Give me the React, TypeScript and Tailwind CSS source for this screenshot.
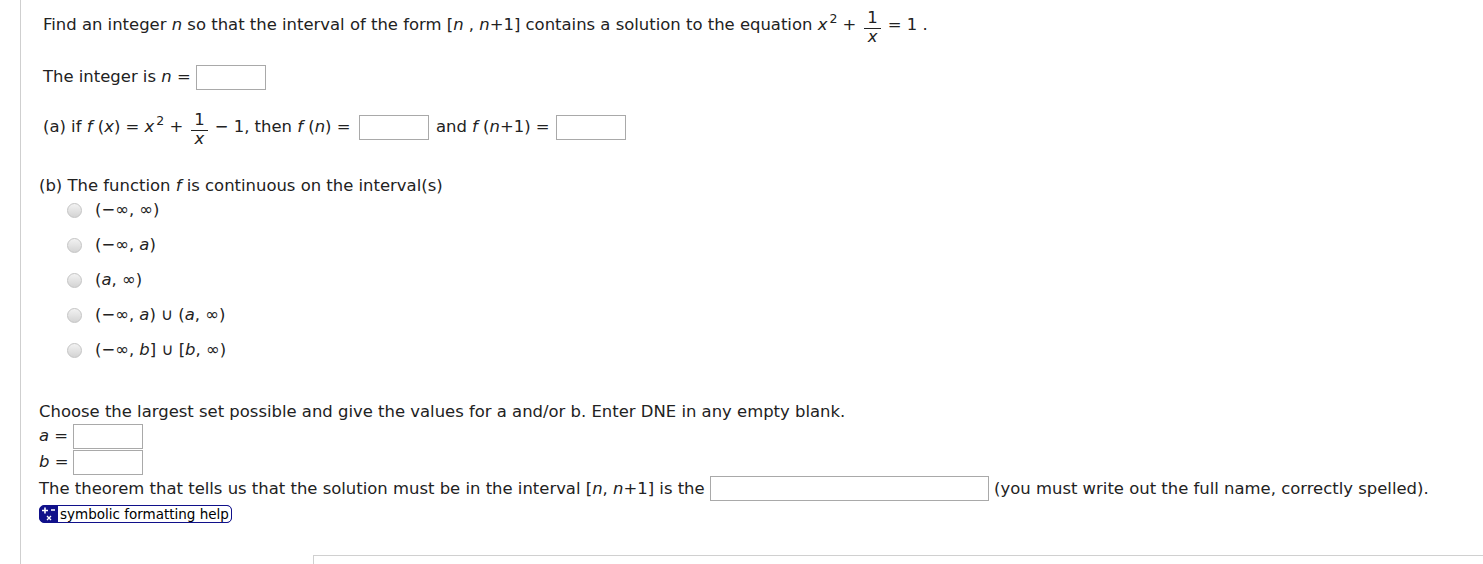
import React from "react";

const Frac = () => (
  <span className="inline-flex flex-col items-center ml-[8px] mr-[7px] relative top-[2px]">
    <span className="leading-[16px] pb-[2px] px-[3px] border-b border-[#222]">1</span>
    <span className="leading-[16px] italic">x</span>
  </span>
);

const Sq = () => <span className="text-[12.5px] relative top-[-6px] ml-[2px]">2</span>;

const Box = ({ w = 70, cls = "" }: { w?: number; cls?: string }) => (
  <span
    className={"inline-block h-[25px] border border-[#a9a9a9] bg-white align-middle shrink-0 " + cls}
    style={{ width: w }}
  />
);

const Radio = () => (
  <span className="inline-block w-[15px] h-[15px] rounded-full border border-[#c4c4c4] bg-gradient-to-b from-[#f2f2f2] to-[#d4d4d4]" />
);

const options: React.ReactNode[] = [
  <>(−∞, ∞)</>,
  <>(−∞, <i>a</i>)</>,
  <>(<i>a</i>, ∞)</>,
  <>(−∞, <i>a</i>) ∪ (<i>a</i>, ∞)</>,
  <>(−∞, <i>b</i>] ∪ [<i>b</i>, ∞)</>,
];

export default function App() {
  return (
    <div
      className="w-[1483px] h-[564px] bg-white text-[#222] text-[16.45px] overflow-hidden relative"
      style={{ fontFamily: "'DejaVu Sans', Verdana, sans-serif" }}
    >
      <div className="ml-[20px] border-l border-[#cfcfcf] h-full flex flex-col">
        <div className="pl-[22px] pt-[11px]">
          <div className="h-[28px] flex items-center whitespace-pre">
            Find an integer <i>n</i> so that the interval of the form [<i>n</i> , <i>n</i>+1] contains a solution to the equation <i>x</i>
            <Sq /> +<Frac />= 1 .
          </div>
          <div className="h-[27px] mt-[25px] flex items-center whitespace-pre">
            The integer is <i>n</i> = <Box />
          </div>
          <div className="h-[27px] mt-[23px] flex items-center whitespace-pre">
            (a) if <i>f</i> (<i>x</i>) = <i>x</i>
            <Sq /> +<Frac />− 1, then <i>f</i> (<i>n</i>) = <Box cls="ml-[3px] mr-[2px]" /> and <i>f</i> (<i>n</i>+1) = <Box cls="ml-[1px]" />
          </div>
        </div>
        <div className="pl-[18px]">
          <div className="h-[22px] mt-[34px] flex items-center whitespace-pre">
            (b) The function <i>f</i> is continuous on the interval(s)
          </div>
          <div className="flex flex-col pl-[28px] -mt-[4px]">
            {options.map((o, i) => (
              <div key={i} className="h-[35px] flex items-center gap-[13px] whitespace-pre">
                <Radio />
                <span>{o}</span>
              </div>
            ))}
          </div>
          <div className="h-[22px] mt-[33px] flex items-center">
            Choose the largest set possible and give the values for a and/or b. Enter DNE in any empty blank.
          </div>
          <div className="h-[26px] flex items-center gap-[10px] whitespace-pre">
            <span className="w-[24px]"><i>a</i> =</span>
            <Box />
          </div>
          <div className="h-[26px] flex items-center gap-[10px] whitespace-pre">
            <span className="w-[24px]"><i>b</i> =</span>
            <Box />
          </div>
          <div className="h-[25px] mt-[1px] flex items-center whitespace-pre">
            <span className="relative top-[1px]">The theorem that tells us that the solution must be in the interval [<i>n</i>, <i>n</i>+1] is the </span>
            <Box w={279} />
            <span className="relative top-[1px]"> (you must write out the full name, correctly spelled).</span>
          </div>
          <div className="mt-[4px] flex">
            <span className="inline-flex items-stretch h-[18px] rounded-[5px] border border-[#10108a] bg-[#10108a] overflow-hidden">
              <svg width="18" height="16" viewBox="0 0 18 16" className="shrink-0">
                <path d="M2 4.5h6M5 1.5v6" stroke="#fff" strokeWidth="1.6" />
                <path d="M11 4h4" stroke="#fff" strokeWidth="1.6" />
                <path d="M7 10l4 4M11 10l-4 4" stroke="#fff" strokeWidth="1.3" />
              </svg>
              <span className="bg-white rounded-r-[4px] px-[2px] text-[13.5px] leading-[16px] text-black">
                symbolic formatting help
              </span>
            </span>
          </div>
        </div>
      </div>
      <div className="absolute left-[313px] top-[555px] w-[1200px] h-[40px] border-l border-t border-[#d0d0d0]" />
    </div>
  );
}
